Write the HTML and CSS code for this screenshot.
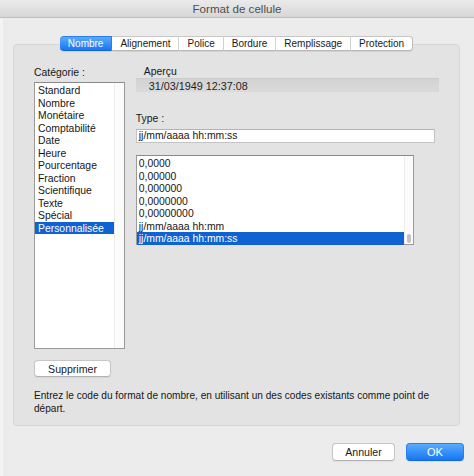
FILE: index.html
```html
<!DOCTYPE html>
<html lang="fr">
<head>
<meta charset="utf-8">
<title>Format de cellule</title>
<link rel="stylesheet" href="styles.css">
</head>
<body>
<div class="window">
  <div class="titlebar">Format de cellule</div>
  <div class="main">
    <div class="tabs">
      <div class="tab active">Nombre</div>
      <div class="tab">Alignement</div>
      <div class="tab">Police</div>
      <div class="tab">Bordure</div>
      <div class="tab">Remplissage</div>
      <div class="tab">Protection</div>
    </div>
    <div class="panel">
      <div class="row">
        <div class="leftcol">
          <div class="label">Catégorie :</div>
          <div class="list catlist">
            <div class="items">
              <div class="item">Standard</div>
              <div class="item">Nombre</div>
              <div class="item">Monétaire</div>
              <div class="item">Comptabilité</div>
              <div class="item">Date</div>
              <div class="item">Heure</div>
              <div class="item">Pourcentage</div>
              <div class="item">Fraction</div>
              <div class="item">Scientifique</div>
              <div class="item">Texte</div>
              <div class="item">Spécial</div>
              <div class="item selected">Personnalisée</div>
            </div>
            <div class="gutter"></div>
          </div>
        </div>
        <div class="rightcol">
          <div class="label preview-label">Aperçu</div>
          <div class="preview">31/03/1949 12:37:08</div>
          <div class="label type-label">Type :</div>
          <div class="input">jj/mm/aaaa hh:mm:ss</div>
          <div class="list fmtlist">
            <div class="items">
              <div class="item">0,0000</div>
              <div class="item">0,00000</div>
              <div class="item">0,000000</div>
              <div class="item">0,0000000</div>
              <div class="item">0,00000000</div>
              <div class="item">jj/mm/aaaa hh:mm</div>
              <div class="item selected">jj/mm/aaaa hh:mm:ss</div>
            </div>
            <div class="gutter"><div class="thumb"></div></div>
          </div>
        </div>
      </div>
      <div class="btn supprimer">Supprimer</div>
      <p class="help">Entrez le code du format de nombre, en utilisant un des codes existants comme point de départ.</p>
    </div>
    <div class="actions">
      <div class="btn annuler">Annuler</div>
      <div class="btn ok">OK</div>
    </div>
  </div>
</div>
</body>
</html>
```
FILE: styles.css
```css
* { box-sizing: border-box; }
html, body { margin: 0; padding: 0; }
body {
  width: 474px;
  height: 476px;
  background: #ececec;
  font-family: "Liberation Sans", Arial, sans-serif;
  font-size: 10.4px;
  color: #161616;
  overflow: hidden;
}
.window {
  width: 474px;
  height: 476px;
  background: #ececec;
  border-left: 3px solid #f3f3f3;
}
.titlebar {
  height: 18px;
  margin-left: -3px;
  background: linear-gradient(#ebebeb, #d7d7d7);
  border-bottom: 1px solid #bdbdbd;
  text-align: center;
  font-size: 11.6px;
  line-height: 18px;
  color: #4f4f4f;
}
.main {
  padding: 18px 0 0 10px;
}
.tabs {
  display: flex;
  justify-content: center;
  width: 447px;
  height: 15px;
  margin-bottom: -7px;
  position: relative;
  z-index: 1;
}
.tab {
  height: 15px;
  padding: 0 8px;
  font-size: 10px;
  line-height: 13px;
  background: #ffffff;
  border-top: 1px solid #c6c6c6;
  border-bottom: 1px solid #b8b8b8;
  border-right: 1px solid #d2d2d2;
  color: #1a1a1a;
  box-shadow: 0 0.5px 1px rgba(0,0,0,0.08);
}
.tab:last-child {
  border-right: 1px solid #bdbdbd;
  border-radius: 0 4px 4px 0;
}
.tab.active {
  background: linear-gradient(#5aabfb, #1577f3);
  border-color: #2c7fe6;
  border-bottom-color: #1565d6;
  color: #fff;
  border-radius: 4px 0 0 4px;
}
.panel {
  width: 447px;
  height: 382px;
  background: #e3e3e3;
  border: 1px solid #d6d6d6;
  border-radius: 4px;
  padding: 21px 20px 0 20px;
}
.row {
  display: flex;
  gap: 11px;
}
.leftcol { width: 91px; }
.rightcol { width: 304px; }
.label {
  height: 13px;
  line-height: 13px;
}
.leftcol .label { margin-bottom: 3px; }
.list {
  display: flex;
  background: #fff;
  border: 1px solid #9a9a9a;
  border-top-color: #8a8a8a;
}
.items { flex: 1; padding-top: 1px; }
.item {
  height: 12.5px;
  line-height: 13px;
  padding-left: 3px;
  white-space: nowrap;
}
.item.selected {
  background: #0f62d1;
  color: #fff;
}
.gutter {
  width: 9px;
  border-left: 1px solid #ececec;
  background: #fbfbfb;
  position: relative;
}
.catlist {
  height: 267px;
}
.catlist .gutter { width: 10px; }
.preview-label {
  padding-left: 8px;
  height: 12px;
  line-height: 12px;
}
.preview {
  height: 14px;
  line-height: 14px;
  background: linear-gradient(#d3d3d3, #dadada);
  border-top: 1px solid #cccccc;
  padding-left: 13px;
  font-size: 10.8px;
  color: #1e1e1e;
}
.type-label {
  margin-top: 20px;
}
.input {
  width: 299px;
  height: 14px;
  margin-top: 4px;
  line-height: 12px;
  background: #fff;
  border: 1px solid #c4c4c4;
  border-top-color: #b4b4b4;
  padding-left: 2px;
}
.fmtlist {
  width: 278px;
  height: 90px;
  margin-top: 12px;
}
.fmtlist .item { padding-left: 2px; }
.thumb {
  position: absolute;
  left: 2px;
  bottom: 1px;
  width: 4px;
  height: 9px;
  border-radius: 2px;
  background: #c2c2c2;
}
.btn {
  display: flex;
  align-items: center;
  justify-content: center;
  height: 17px;
  background: #fff;
  border: 1px solid #c6c6c6;
  border-bottom-color: #b3b3b3;
  border-radius: 4px;
  font-size: 10.6px;
  color: #1a1a1a;
  box-shadow: 0 0.5px 1px rgba(0,0,0,0.06);
}
.supprimer {
  width: 77px;
  margin-top: 11px;
}
.help {
  margin: 12px 0 0 0;
  width: 400px;
  line-height: 13px;
  font-size: 10.1px;
}
.actions {
  display: flex;
  justify-content: flex-end;
  gap: 11px;
  width: 451px;
  margin-top: 17px;
}
.annuler {
  width: 63px;
  height: 18px;
}
.ok {
  width: 58px;
  height: 18px;
  background: linear-gradient(#5aabfb, #1577f3);
  border-color: #2a7fe8;
  border-bottom-color: #1566d6;
  color: #fff;
  font-size: 11px;
}
```
